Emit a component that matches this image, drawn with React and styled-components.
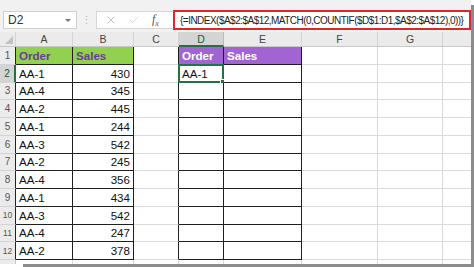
import React from 'react'
import styled, { createGlobalStyle } from 'styled-components'
import { X, Check } from 'lucide-react'

const GlobalStyle = createGlobalStyle`
  html, body {
    margin: 0;
    padding: 0;
    background: #ffffff;
  }
`

const COLS = ['A', 'B', 'C', 'D', 'E', 'F', 'G', 'H']
const WIDTHS = [57, 61, 45, 45, 78, 76, 65, 65]

const DATA = [
  ['Order', 'Sales', '', 'Order', 'Sales'],
  ['AA-1', 430, '', 'AA-1', ''],
  ['AA-4', 345],
  ['AA-2', 445],
  ['AA-1', 244],
  ['AA-3', 542],
  ['AA-2', 245],
  ['AA-4', 356],
  ['AA-1', 434],
  ['AA-3', 542],
  ['AA-4', 247],
  ['AA-2', 378],
]

// rows 1..12, cols 0..7 (A..H)
const boxed = (r, c) => r >= 1 && r <= 12 && (c === 0 || c === 1 || c === 3 || c === 4)

const Frame = styled.div`
  width: 474px;
  height: 267px;
  display: flex;
  flex-direction: column;
  background: #ffffff;
`

const TopRow = styled.div`
  display: flex;
  height: 264px;
`

const RightEdge = styled.div`
  width: 3px;
  margin-top: 5px;
  background: #8c8c8c;
`

const BottomEdge = styled.div`
  height: 3px;
  margin-left: 23px;
  background: #8c8c8c;
`

const Sheet = styled.div`
  width: 471px;
  height: 264px;
  overflow: hidden;
  display: flex;
  flex-direction: column;
`

const Toolbar = styled.div`
  height: 32px;
  flex: none;
  display: flex;
  align-items: flex-start;
  padding-top: 11px;
  box-sizing: border-box;
  background: #f1f1f1;
  font-family: "Liberation Sans", Arial, sans-serif;
`

const NameBox = styled.div`
  flex: none;
  margin-left: 3px;
  width: 74px;
  height: 18px;
  box-sizing: border-box;
  border: 1px solid #cfcfcf;
  background: #ffffff;
  display: flex;
  align-items: center;
  justify-content: space-between;
  padding: 0 5px 0 4px;
  font-size: 12px;
  color: #333;
`

const Caret = styled.span`
  width: 0;
  height: 0;
  border-left: 3px solid transparent;
  border-right: 3px solid transparent;
  border-top: 3px solid #777;
`

const Grip = styled.div`
  flex: none;
  width: 19px;
  height: 18px;
  display: flex;
  align-items: center;
  justify-content: center;
  color: #b4b4b4;
  font-size: 11px;
`

const FormulaBox = styled.div`
  flex: 1;
  min-width: 0;
  height: 18px;
  display: flex;
  background: #ffffff;
  border: 1px solid #d6d6d6;
  border-right: none;
  box-sizing: border-box;
`

const IconArea = styled.div`
  flex: none;
  width: 76px;
  display: flex;
  align-items: center;
  gap: 11px;
  padding-left: 8px;
  box-sizing: border-box;
  color: #a6a6a6;
`

const Fx = styled.span`
  font-family: "Liberation Serif", serif;
  font-style: italic;
  font-size: 12px;
  color: #555;
  margin-left: 1px;
  sub {
    font-size: 8px;
  }
`

const FormulaText = styled.div`
  flex: 1;
  min-width: 0;
  height: 20px;
  margin-top: -2px;
  box-sizing: border-box;
  border: 2px solid #e0262b;
  display: flex;
  align-items: center;
  padding-left: 5px;
  font-family: "Liberation Sans", Arial, sans-serif;
  font-size: 10px;
  letter-spacing: -0.52px;
  color: #222;
  white-space: nowrap;
  overflow: hidden;
`

const Grid = styled.div`
  display: grid;
  grid-template-columns: 16px ${WIDTHS.map((w) => w + 'px').join(' ')};
  grid-template-rows: 15px repeat(12, 17.75px) 17px;
  font-family: "Liberation Sans", Arial, sans-serif;
`

const Corner = styled.div`
  background: #ebebeb;
  border-right: 1px solid #d4d4d4;
  border-bottom: 1px solid #c8c8c8;
  box-sizing: border-box;
  position: relative;
  &::after {
    content: '';
    position: absolute;
    right: 2px;
    bottom: 2px;
    border-left: 8px solid transparent;
    border-bottom: 8px solid #c2c2c2;
  }
`

const ColHead = styled.div`
  background: ${(p) => (p.$active ? '#d4d4d4' : '#ebebeb')};
  border-right: 1px solid ${(p) => (p.$active ? '#b8b8b8' : '#d4d4d4')};
  border-bottom: ${(p) => (p.$active ? '2px solid #217346' : '1px solid #c8c8c8')};
  box-sizing: border-box;
  display: flex;
  align-items: center;
  justify-content: center;
  font-size: 10.5px;
  color: ${(p) => (p.$active ? '#215a36' : '#444')};
`

const RowHead = styled.div`
  background: ${(p) => (p.$active ? '#d4d4d4' : '#ebebeb')};
  border-right: ${(p) => (p.$active ? '2px solid #217346' : `1px solid ${p.$dark ? '#222' : '#c8c8c8'}`)};
  border-bottom: 1px solid #d4d4d4;
  box-sizing: border-box;
  display: flex;
  align-items: center;
  justify-content: center;
  font-size: ${(p) => (p.$small ? '8.5px' : '10px')};
  color: ${(p) => (p.$active ? '#215a36' : '#555')};
`

const Cell = styled.div`
  position: relative;
  box-sizing: border-box;
  border-right: 1px solid ${(p) => (p.$darkRight ? '#1f1f1f' : '#dadada')};
  border-bottom: 1px solid ${(p) => (p.$darkBottom ? '#1f1f1f' : '#dadada')};
  background: ${(p) => p.$fill || '#ffffff'};
  display: flex;
  align-items: flex-end;
  justify-content: ${(p) => (p.$num ? 'flex-end' : 'flex-start')};
  padding: 0 3px 2px 3px;
  font-size: 11.6px;
  font-weight: ${(p) => (p.$bold ? 700 : 400)};
  color: ${(p) => p.$color || '#111'};
  white-space: nowrap;
  overflow: visible;
`

const Selection = styled.div`
  position: absolute;
  left: -1px;
  top: -1px;
  right: -1px;
  bottom: -1px;
  border: 2px solid #217346;
  pointer-events: none;
  &::after {
    content: '';
    position: absolute;
    right: -4px;
    bottom: -4px;
    width: 4px;
    height: 4px;
    background: #217346;
    border: 1px solid #ffffff;
  }
`

function cellStyle(r, c) {
  if (r === 1 && (c === 0 || c === 1)) return { fill: '#92d050', color: '#6a3d9a', bold: true }
  if (r === 1 && (c === 3 || c === 4)) return { fill: '#a264d3', color: '#ffffff', bold: true }
  return {}
}

export default function App() {
  const rows = []
  for (let r = 1; r <= 13; r++) {
    const data = DATA[r - 1] || []
    rows.push(
      <RowHead
        key={'h' + r}
        $active={r === 2}
        $dark={boxed(r, 0)}
        $small={r >= 10}
      >
        {r}
      </RowHead>
    )
    COLS.forEach((col, c) => {
      const v = data[c]
      const s = cellStyle(r, c)
      rows.push(
        <Cell
          key={col + r}
          $darkRight={boxed(r, c) || boxed(r, c + 1)}
          $darkBottom={boxed(r, c) || boxed(r + 1, c)}
          $fill={s.fill}
          $color={s.color}
          $bold={s.bold}
          $num={typeof v === 'number'}
        >
          {v}
          {r === 2 && c === 3 && <Selection />}
        </Cell>
      )
    })
  }

  return (
    <Frame>
      <GlobalStyle />
      <TopRow>
        <Sheet>
          <Toolbar>
            <NameBox>
              D2
              <Caret />
            </NameBox>
            <Grip>⋮</Grip>
            <FormulaBox>
              <IconArea>
                <X size={12} strokeWidth={1.3} />
                <Check size={12} strokeWidth={1.3} color="#c4c4c4" />
                <Fx>
                  f<sub>x</sub>
                </Fx>
              </IconArea>
              <FormulaText>{'{=INDEX($A$2:$A$12,MATCH(0,COUNTIF($D$1:D1,$A$2:$A$12),0))}'}</FormulaText>
            </FormulaBox>
          </Toolbar>
          <Grid>
            <Corner />
            {COLS.map((col) => (
              <ColHead key={col} $active={col === 'D'}>
                {col}
              </ColHead>
            ))}
            {rows}
          </Grid>
        </Sheet>
        <RightEdge />
      </TopRow>
      <BottomEdge />
    </Frame>
  )
}
